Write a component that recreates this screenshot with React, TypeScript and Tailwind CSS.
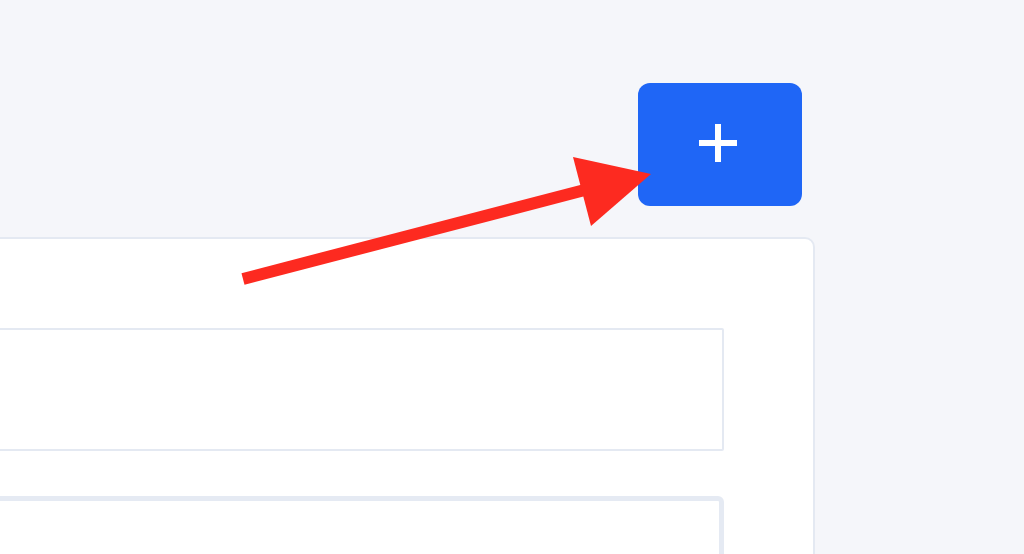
export default function App() {
  return (
    <div className="relative h-[554px] w-[1024px] overflow-hidden bg-[#f5f6fa]" style={{ fontFamily: '"Liberation Sans", sans-serif' }}>
      <div className="flex justify-end pt-[83px] pr-[222px]">
        <button className="flex h-[123px] w-[164px] items-center justify-center rounded-[12px] bg-[#1f66f6]">
          <svg className="-translate-x-[2px] -translate-y-[2px]" width="40" height="40" viewBox="0 0 40 40">
            <path d="M20 1V39M1 20H39" stroke="white" strokeWidth="6" />
          </svg>
        </button>
      </div>
      <div className="ml-[-40px] mr-[209px] mt-[31px] h-[400px] rounded-[10px] border-2 border-[#e4e9f2] bg-white pt-[89px] pr-[89px]">
        <div className="h-[123px] rounded-[2px] border-2 border-[#e4e9f2] bg-white" />
        <div className="mt-[45px] h-[200px] rounded-[6px] border-[5px] border-[#e5eaf3] bg-white" />
      </div>
      <svg className="pointer-events-none absolute left-0 top-0" width="1024" height="554" viewBox="0 0 1024 554">
        <line x1="243" y1="279" x2="600" y2="186" stroke="#fd2a20" strokeWidth="12" />
        <polygon points="573,157 651,174 591,226" fill="#fd2a20" />
      </svg>
    </div>
  );
}
